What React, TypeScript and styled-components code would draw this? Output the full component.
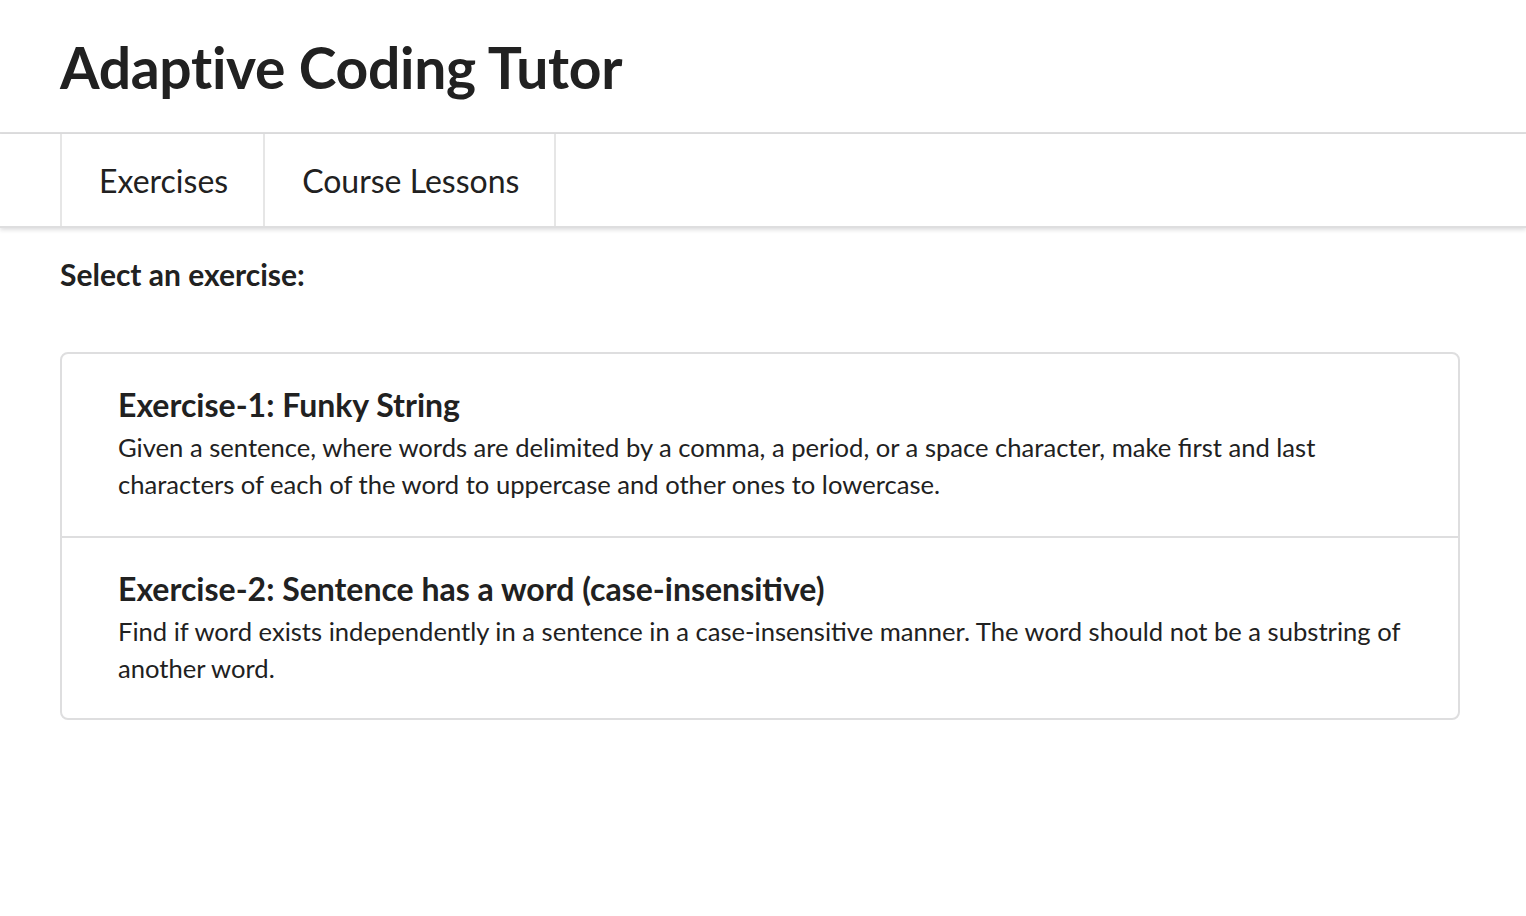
import styled, { createGlobalStyle } from 'styled-components'

const GlobalStyle = createGlobalStyle`
	body {
		margin: 0;
		background: #fff;
		font-family: Lato, "Helvetica Neue", Arial, sans-serif;
		color: rgba(0, 0, 0, 0.87);
	}
	* { box-sizing: border-box; }
`

const exercises = [
	{
		id: 1,
		title: 'Exercise-1: Funky String',
		description:
			'Given a sentence, where words are delimited by a comma, a period, or a space character, make first and last characters of each of the word to uppercase and other ones to lowercase.',
	},
	{
		id: 2,
		title: 'Exercise-2: Sentence has a word (case-insensitive)',
		description:
			'Find if word exists independently in a sentence in a case-insensitive manner. The word should not be a substring of another word.',
	},
]

export default function App() {
	return (
		<Page>
			<GlobalStyle />
			<Header>
				<Title>Adaptive Coding Tutor</Title>
			</Header>
			<Menu>
				<MenuItem>Exercises</MenuItem>
				<MenuItem>Course Lessons</MenuItem>
			</Menu>
			<Content>
				<Prompt>Select an exercise:</Prompt>
				<List>
					{exercises.map((ex) => (
						<Item key={ex.id}>
							<ItemTitle>{ex.title}</ItemTitle>
							<ItemDesc>{ex.description}</ItemDesc>
						</Item>
					))}
				</List>
			</Content>
		</Page>
	)
}

const Page = styled.div`
	min-height: 916px;
	background: #fff;
`

const Header = styled.header`
	height: 134px;
	padding: 0 60px;
	display: flex;
	align-items: center;
	border-bottom: 2px solid #dededf;
`

const Title = styled.h1`
	margin: 0;
	font-size: 57px;
	font-weight: 700;
	line-height: 1;
	color: #212121;
	letter-spacing: -0.3px;
	padding-top: 2px;
`

const Menu = styled.nav`
	display: flex;
	height: 94px;
	padding-left: 60px;
	border-bottom: 2px solid #dededf;
	box-shadow: 0 2px 4px 0 rgba(34, 36, 38, 0.15);
`

const MenuItem = styled.div`
	display: flex;
	align-items: center;
	padding: 0 35px 0 37px;
	font-size: 32px;
	color: #212121;
	border-left: 2px solid #e6e6e6;
	cursor: pointer;
	&:last-child {
		border-right: 2px solid #e6e6e6;
	}
`

const Content = styled.main`
	padding: 28px 66px 0 60px;
`

const Prompt = styled.div`
	font-size: 30px;
	font-weight: 700;
	color: #212121;
	line-height: 36px;
	margin-bottom: 60px;
`

const List = styled.div`
	border: 2px solid #dededf;
	border-radius: 8px;
`

const Item = styled.div`
	padding: 31px 56px 30px 56px;
	height: 182px;
	& + & {
		border-top: 2px solid #dededf;
	}
`

const ItemTitle = styled.div`
	font-size: 32px;
	font-weight: 700;
	line-height: 40px;
	color: #212121;
	margin-bottom: 4px;
`

const ItemDesc = styled.div`
	font-size: 25.6px;
	line-height: 37px;
	color: #212121;
`
